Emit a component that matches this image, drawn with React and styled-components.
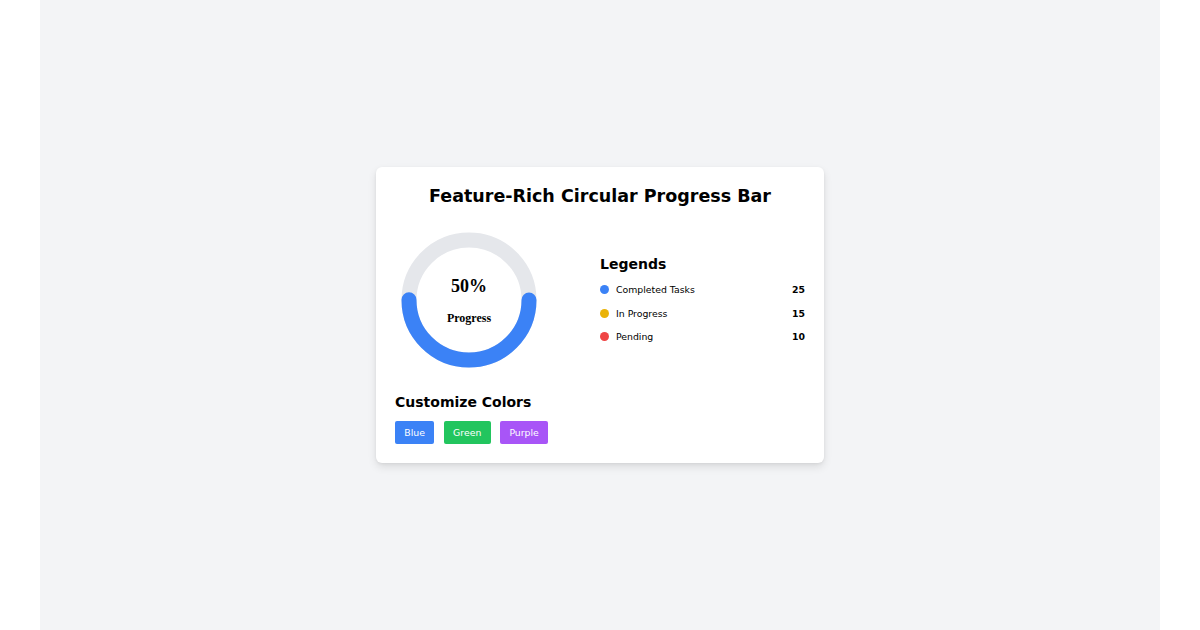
import React, { useState } from "react";
import styled, { createGlobalStyle } from "styled-components";

const GlobalStyle = createGlobalStyle`
  body {
    margin: 0;
    background: #ffffff;
    font-family: "DejaVu Sans", sans-serif;
  }
`;

const Page = styled.div`
  max-width: 1120px;
  margin: 0 auto;
  min-height: 630px;
  background-color: #f3f4f6;
  display: flex;
  align-items: center;
  justify-content: center;
`;

const Card = styled.div`
  width: 448px;
  box-sizing: border-box;
  background: #ffffff;
  border-radius: 6px;
  padding: 19px;
  box-shadow: 0 4px 8px rgba(0, 0, 0, 0.1), 0 1px 3px rgba(0, 0, 0, 0.06);
`;

const Title = styled.h2`
  margin: 0 0 18px;
  font-size: 17.5px;
  line-height: 21px;
  font-weight: bold;
  text-align: center;
  color: #000;
`;

const Row = styled.div`
  display: flex;
  align-items: center;
  justify-content: space-between;
`;

const Ring = styled.div`
  position: relative;
  width: 150px;
  height: 150px;
  margin-left: -1px;
`;

const Center = styled.div`
  position: absolute;
  inset: 0;
  display: flex;
  flex-direction: column;
  align-items: center;
  justify-content: center;
  font-family: "Liberation Serif", serif;
  font-weight: bold;
  color: #000;
`;

const Percent = styled.div`
  font-size: 18px;
  line-height: 22px;
  margin-top: -1px;
  margin-bottom: 14px;
`;

const Caption = styled.div`
  font-size: 12px;
  line-height: 14px;
`;

const Legend = styled.div`
  width: 50%;
  padding-top: 4px;
`;

const SubTitle = styled.h3`
  margin: 0 0 5px;
  font-size: 14px;
  line-height: 17px;
  font-weight: bold;
  color: #000;
`;

const LegendRow = styled.div`
  display: flex;
  align-items: center;
  height: 23.5px;
  font-size: 9.33px;
`;

const Dot = styled.span`
  width: 9px;
  height: 9px;
  border-radius: 50%;
  background: ${(p) => p.color};
  margin-right: 7px;
  flex-shrink: 0;
`;

const Label = styled.span`
  flex: 1;
  color: #000;
`;

const Value = styled.span`
  font-weight: bold;
  color: #000;
`;

const Section = styled.div`
  margin-top: 19px;
`;

const Buttons = styled.div`
  display: flex;
  gap: 9.5px;
  margin-top: 10px;
`;

const ColorButton = styled.button`
  border: none;
  border-radius: 2px;
  background: ${(p) => p.color};
  color: #fff;
  font-family: "DejaVu Sans", sans-serif;
  font-size: 9.33px;
  line-height: 13px;
  padding: 5px 9.3px;
  cursor: pointer;
`;

const legends = [
  { label: "Completed Tasks", value: 25, color: "#3b82f6" },
  { label: "In Progress", value: 15, color: "#eab308" },
  { label: "Pending", value: 10, color: "#ef4444" },
];

const colors = [
  { name: "Blue", value: "#3b82f6" },
  { name: "Green", value: "#22c55e" },
  { name: "Purple", value: "#a855f7" },
];

const App = () => {
  const [color, setColor] = useState("#3b82f6");
  const progress = 50;
  const r = 60;
  const c = 2 * Math.PI * r;

  return (
    <>
      <GlobalStyle />
      <Page>
        <Card>
          <Title>Feature-Rich Circular Progress Bar</Title>
          <Row>
            <Ring>
              <svg width="150" height="150" viewBox="0 0 150 150">
                <circle cx="75" cy="75" r={r} fill="none" stroke="#e5e7eb" strokeWidth="15" />
                <circle
                  cx="75"
                  cy="75"
                  r={r}
                  fill="none"
                  stroke={color}
                  strokeWidth="15"
                  strokeLinecap="round"
                  strokeDasharray={c}
                  strokeDashoffset={c * (1 - progress / 100)}
                />
              </svg>
              <Center>
                <Percent>{progress}%</Percent>
                <Caption>Progress</Caption>
              </Center>
            </Ring>
            <Legend>
              <SubTitle>Legends</SubTitle>
              {legends.map((l) => (
                <LegendRow key={l.label}>
                  <Dot color={l.color} />
                  <Label>{l.label}</Label>
                  <Value>{l.value}</Value>
                </LegendRow>
              ))}
            </Legend>
          </Row>
          <Section>
            <SubTitle>Customize Colors</SubTitle>
            <Buttons>
              {colors.map((b) => (
                <ColorButton key={b.name} color={b.value} onClick={() => setColor(b.value)}>
                  {b.name}
                </ColorButton>
              ))}
            </Buttons>
          </Section>
        </Card>
      </Page>
    </>
  );
};

export default App;
